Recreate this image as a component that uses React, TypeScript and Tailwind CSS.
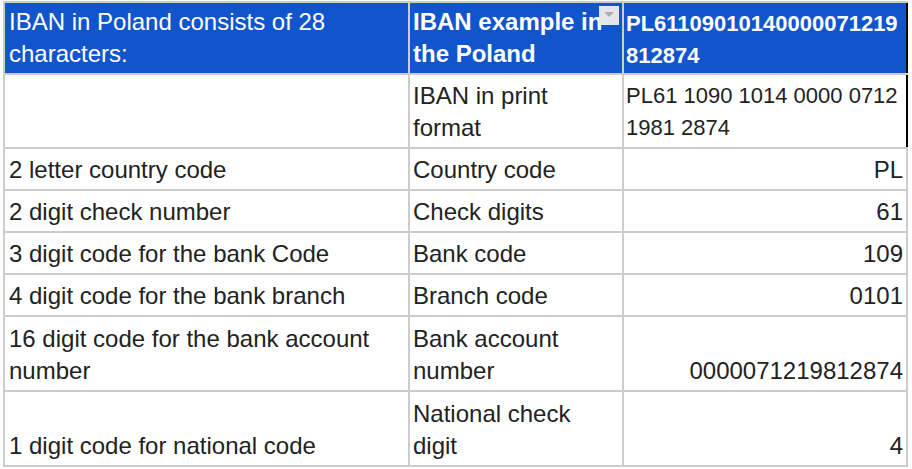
import React from 'react';

interface Row {
  label: string;
  name: string;
  value: string;
  h: string;
  small?: boolean;
}

const rows: Row[] = [
  { label: '', name: 'IBAN in print format', value: 'PL61 1090 1014 0000 0712 1981 2874', h: 'h-[72px]', small: true },
  { label: '2 letter country code', name: 'Country code', value: 'PL', h: 'h-[40px]' },
  { label: '2 digit check number', name: 'Check digits', value: '61', h: 'h-[40px]' },
  { label: '3 digit code for the bank Code', name: 'Bank code', value: '109', h: 'h-[40px]' },
  { label: '4 digit code for the bank branch', name: 'Branch code', value: '0101', h: 'h-[40px]' },
  { label: '16 digit code for the bank account number', name: 'Bank account number', value: '0000071219812874', h: 'h-[73px]' },
  { label: '1 digit code for national code', name: 'National check digit', value: '4', h: 'h-[73px]' },
];

const base = 'flex items-end bg-white pb-[3px] leading-[32px] text-[#222]';

export default function App() {
  return (
    <div className="h-[469px] w-[912px] bg-white pl-[3px] pt-[1px]" style={{ fontFamily: '"Liberation Sans", Arial, sans-serif' }}>
      <div className="grid w-[905px] grid-cols-[403px_212px_282px] gap-[2px] bg-[#cccccc] p-[2px]">
        <div className="flex h-[70px] items-start bg-[#1155cc] px-[4px] pt-[3px] text-[24px] leading-[32px] text-white">
          IBAN in Poland consists of 28 characters:
        </div>
        <div className="relative flex h-[70px] items-start bg-[#1155cc] px-[3px] pt-[3px] text-[24px] font-bold leading-[32px] text-white">
          <span>IBAN example in the Poland</span>
          <div className="absolute left-[189px] top-[3px] flex h-[19px] w-[20px] justify-center bg-[#e4e6ea]">
            <div className="mt-[6px] h-0 w-0 border-x-[5px] border-t-[5px] border-x-transparent border-t-[#a9acb2]" />
          </div>
        </div>
        <div className="flex h-[70px] items-start break-all bg-[#1155cc] px-[2px] pt-[5px] text-[22px] font-bold leading-[32px] text-white shadow-[2px_0_0_#000]">
          PL61109010140000071219812874
        </div>

        {rows.map((r, i) => (
          <React.Fragment key={i}>
            <div className={`${base} ${r.h} px-[4px] text-[24px]`}>{r.label}</div>
            <div className={`${base} ${r.h} px-[3px] text-[24px]`}>{r.name}</div>
            {r.small ? (
              <div className={`${base} ${r.h} px-[2px] text-[22px] shadow-[2px_0_0_#000]`}>{r.value}</div>
            ) : (
              <div className={`${base} ${r.h} justify-end px-[3px] text-[24px]`}>{r.value}</div>
            )}
          </React.Fragment>
        ))}
      </div>
    </div>
  );
}
